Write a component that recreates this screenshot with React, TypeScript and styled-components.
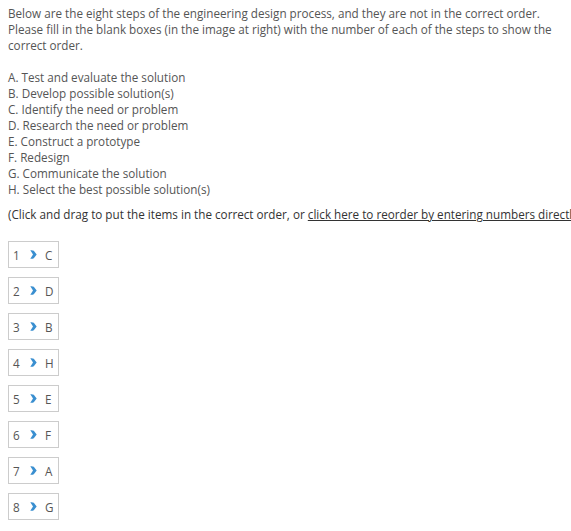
import React from "react";
import styled, { createGlobalStyle } from "styled-components";

const Global = createGlobalStyle`
  html, body { margin: 0; padding: 0; background: #fff; overflow: hidden; }
  body { font-family: "Open Sans", "DejaVu Sans", sans-serif; }
`;

const Page = styled.div`
  padding: 5px 8px 8px 8px;
  width: 571px;
  box-sizing: border-box;
  overflow: hidden;
  font-size: 11.7px;
  line-height: 16px;
  color: #555;
`;

const Intro = styled.p`
  margin: 0 0 16px 0;
`;

const StepList = styled.div`
  display: flex;
  flex-direction: column;
`;

const Instruction = styled.div`
  margin-top: 9px;
  white-space: nowrap;
  color: #333;
`;

const Link = styled.a`
  color: #333;
  text-decoration: underline;
  cursor: pointer;
`;

const Boxes = styled.div`
  display: flex;
  flex-direction: column;
  gap: 9px;
  margin-top: 19px;
`;

const OrderBox = styled.div`
  width: 51px;
  height: 27px;
  box-sizing: border-box;
  border: 1px solid #ccc;
  display: flex;
  align-items: center;
  padding-left: 4px;
  color: #555;
`;

const Num = styled.span`
  width: 12px;
`;

const Arrow = styled.svg`
  width: 7px;
  height: 9px;
  margin: 0 8px 0 5px;
`;

const Letter = styled.span``;

const steps = [
  "A. Test and evaluate the solution",
  "B. Develop possible solution(s)",
  "C. Identify the need or problem",
  "D. Research the need or problem",
  "E. Construct a prototype",
  "F. Redesign",
  "G. Communicate the solution",
  "H. Select the best possible solution(s)",
];

const order = ["C", "D", "B", "H", "E", "F", "A", "G"];

export default function App() {
  return (
    <>
      <Global />
      <Page>
        <Intro>
          Below are the eight steps of the engineering design process, and they are not in the correct order.
          Please fill in the blank boxes (in the image at right) with the number of each of the steps to show the
          correct order.
        </Intro>
        <StepList>
          {steps.map((s) => (
            <div key={s}>{s}</div>
          ))}
        </StepList>
        <Instruction>
          (Click and drag to put the items in the correct order, or{" "}
          <Link>click here to reorder by entering numbers directly</Link>)
        </Instruction>
        <Boxes>
          {order.map((l, i) => (
            <OrderBox key={l}>
              <Num>{i + 1}</Num>
              <Arrow viewBox="0 0 7 9">
                <path d="M0.3 0.3 Q2.5 0 3.8 0.8 L6.7 4.5 L3.8 8.2 Q2.5 9 0.3 8.7 L3 4.5 Z" fill="#3a8fd0" />
              </Arrow>
              <Letter>{l}</Letter>
            </OrderBox>
          ))}
        </Boxes>
      </Page>
    </>
  );
}
